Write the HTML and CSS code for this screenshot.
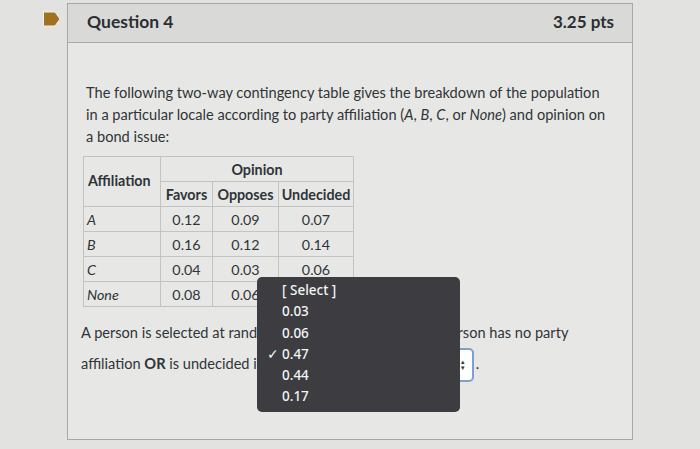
FILE: index.html
```html
<!DOCTYPE html>
<html>
<head>
<meta charset="utf-8">
<link rel="stylesheet" href="styles.css">
</head>
<body>
<div class="page">
  <div class="rail">
    <svg class="flag" width="19" height="16" viewBox="0 0 19 16"><path d="M1.5 1 H13 L18 8 L13 15 H1.5 Z" fill="#a0711f" stroke="#f3f1ea" stroke-width="1"/></svg>
  </div>
  <div class="card">
    <div class="head">
      <span class="title">Question 4</span>
      <span class="pts">3.25 pts</span>
    </div>
    <div class="body">
      <p class="intro">The following two-way contingency table gives the breakdown of the population<br>in a particular locale according to party affiliation (<i>A</i>, <i>B</i>, <i>C</i>, or <i>None</i>) and opinion on<br>a bond issue:</p>
      <table class="ct">
        <colgroup><col class="w0"><col class="w1"><col class="w2"><col class="w3"></colgroup>
        <tr><th rowspan="2" class="aff">Affiliation</th><th colspan="3" class="op">Opinion</th></tr>
        <tr><th>Favors</th><th>Opposes</th><th>Undecided</th></tr>
        <tr><td class="lab">A</td><td>0.12</td><td>0.09</td><td>0.07</td></tr>
        <tr><td class="lab">B</td><td>0.16</td><td>0.12</td><td>0.14</td></tr>
        <tr><td class="lab">C</td><td>0.04</td><td>0.03</td><td>0.06</td></tr>
        <tr><td class="lab">None</td><td>0.08</td><td>0.06</td><td>0.09</td></tr>
      </table>
      <p class="q">A person is selected at rand<span class="hid">om. Find the probability the pe</span>rson has no party<br>affiliation <b>OR</b> is undecided is <span class="sel"><span class="selval">0.47</span><span class="arrows">&#9650;<br>&#9660;</span></span>.</p>
    </div>
  </div>
</div>
<div class="menu">
  <div class="opt">[ Select ]</div>
  <div class="opt">0.03</div>
  <div class="opt">0.06</div>
  <div class="opt"><span class="chk">&#10003;</span>0.47</div>
  <div class="opt">0.44</div>
  <div class="opt">0.17</div>
</div>
</body>
</html>
```
FILE: styles.css
```css
html, body { margin: 0; padding: 0; }
body {
  width: 700px; height: 449px; overflow: hidden;
  background: #e2e3e0;
  font-family: Lato, "Open Sans", sans-serif;
  color: #2f3438;
  position: relative;
}
.page { display: flex; padding-top: 3px; }
.rail { width: 67px; flex: none; padding: 8px 0 0 42px; box-sizing: border-box; }
.flag { display: block; }
.card {
  width: 566px; height: 437px; box-sizing: border-box;
  border: 1px solid #a7a8a5; background: #e7e8e5;
}
.head {
  height: 39px; box-sizing: border-box;
  background: #d9dad7; border-bottom: 1px solid #a9aaa7;
  display: flex; justify-content: space-between; align-items: center;
  padding: 0 18px 4px 19px;
}
.title, .pts { font-size: 17.5px; font-weight: 700; color: #2b2f33; }
.pts { font-size: 17px; }
.body { padding: 39px 10px 0 18px; }
.intro { margin: 0; font-size: 14.6px; line-height: 22px; white-space: nowrap; }
.ct {
  margin-top: 8px; margin-left: -3px;
  border-collapse: collapse; font-size: 14.3px;
  border: 1px solid #8f908e;
  table-layout: fixed; width: 270px;
}
.w0 { width: 77px; } .w1 { width: 52px; } .w2 { width: 66px; } .w3 { width: 75px; }
.ct th, .ct td { border: 1px solid #c3c4c1; padding: 0 2px; height: 24px; white-space: nowrap; }
.ct th { font-weight: 700; }
.ct .aff { text-align: left; padding: 0 0 2px 4px; }
.ct .op { text-align: center; }
.ct td { text-align: center; }
.ct td.lab { text-align: left; font-style: italic; font-weight: 400; padding-left: 3px; }
.q { margin: 11px 0 0 -5px; font-size: 14.6px; line-height: 30px; white-space: nowrap; }
.hid { word-spacing: 0.8px; }
.sel {
  display: inline-flex; align-items: center; justify-content: space-between;
  vertical-align: middle;
  width: 205px; height: 34px; box-sizing: border-box;
  border: 2px solid #7d9fd3; border-radius: 5px; background: #fff;
  padding: 0 6px 0 10px; margin-left: 2px; margin-right: 2px;
}
.arrows { font-size: 6px; line-height: 6px; text-align: center; color: #333; }
.menu {
  position: absolute; left: 257px; top: 277px;
  width: 203px; height: 135px; box-sizing: border-box;
  background: #3c3c41; border-radius: 5px;
  padding: 3px 0 0 25px;
  font-family: "Noto Sans", sans-serif; font-size: 13.5px; font-weight: 500;
  color: #f4f4f4;
}
.opt { height: 21.3px; line-height: 21px; position: relative; }
.chk { position: absolute; left: -15px; }
```
